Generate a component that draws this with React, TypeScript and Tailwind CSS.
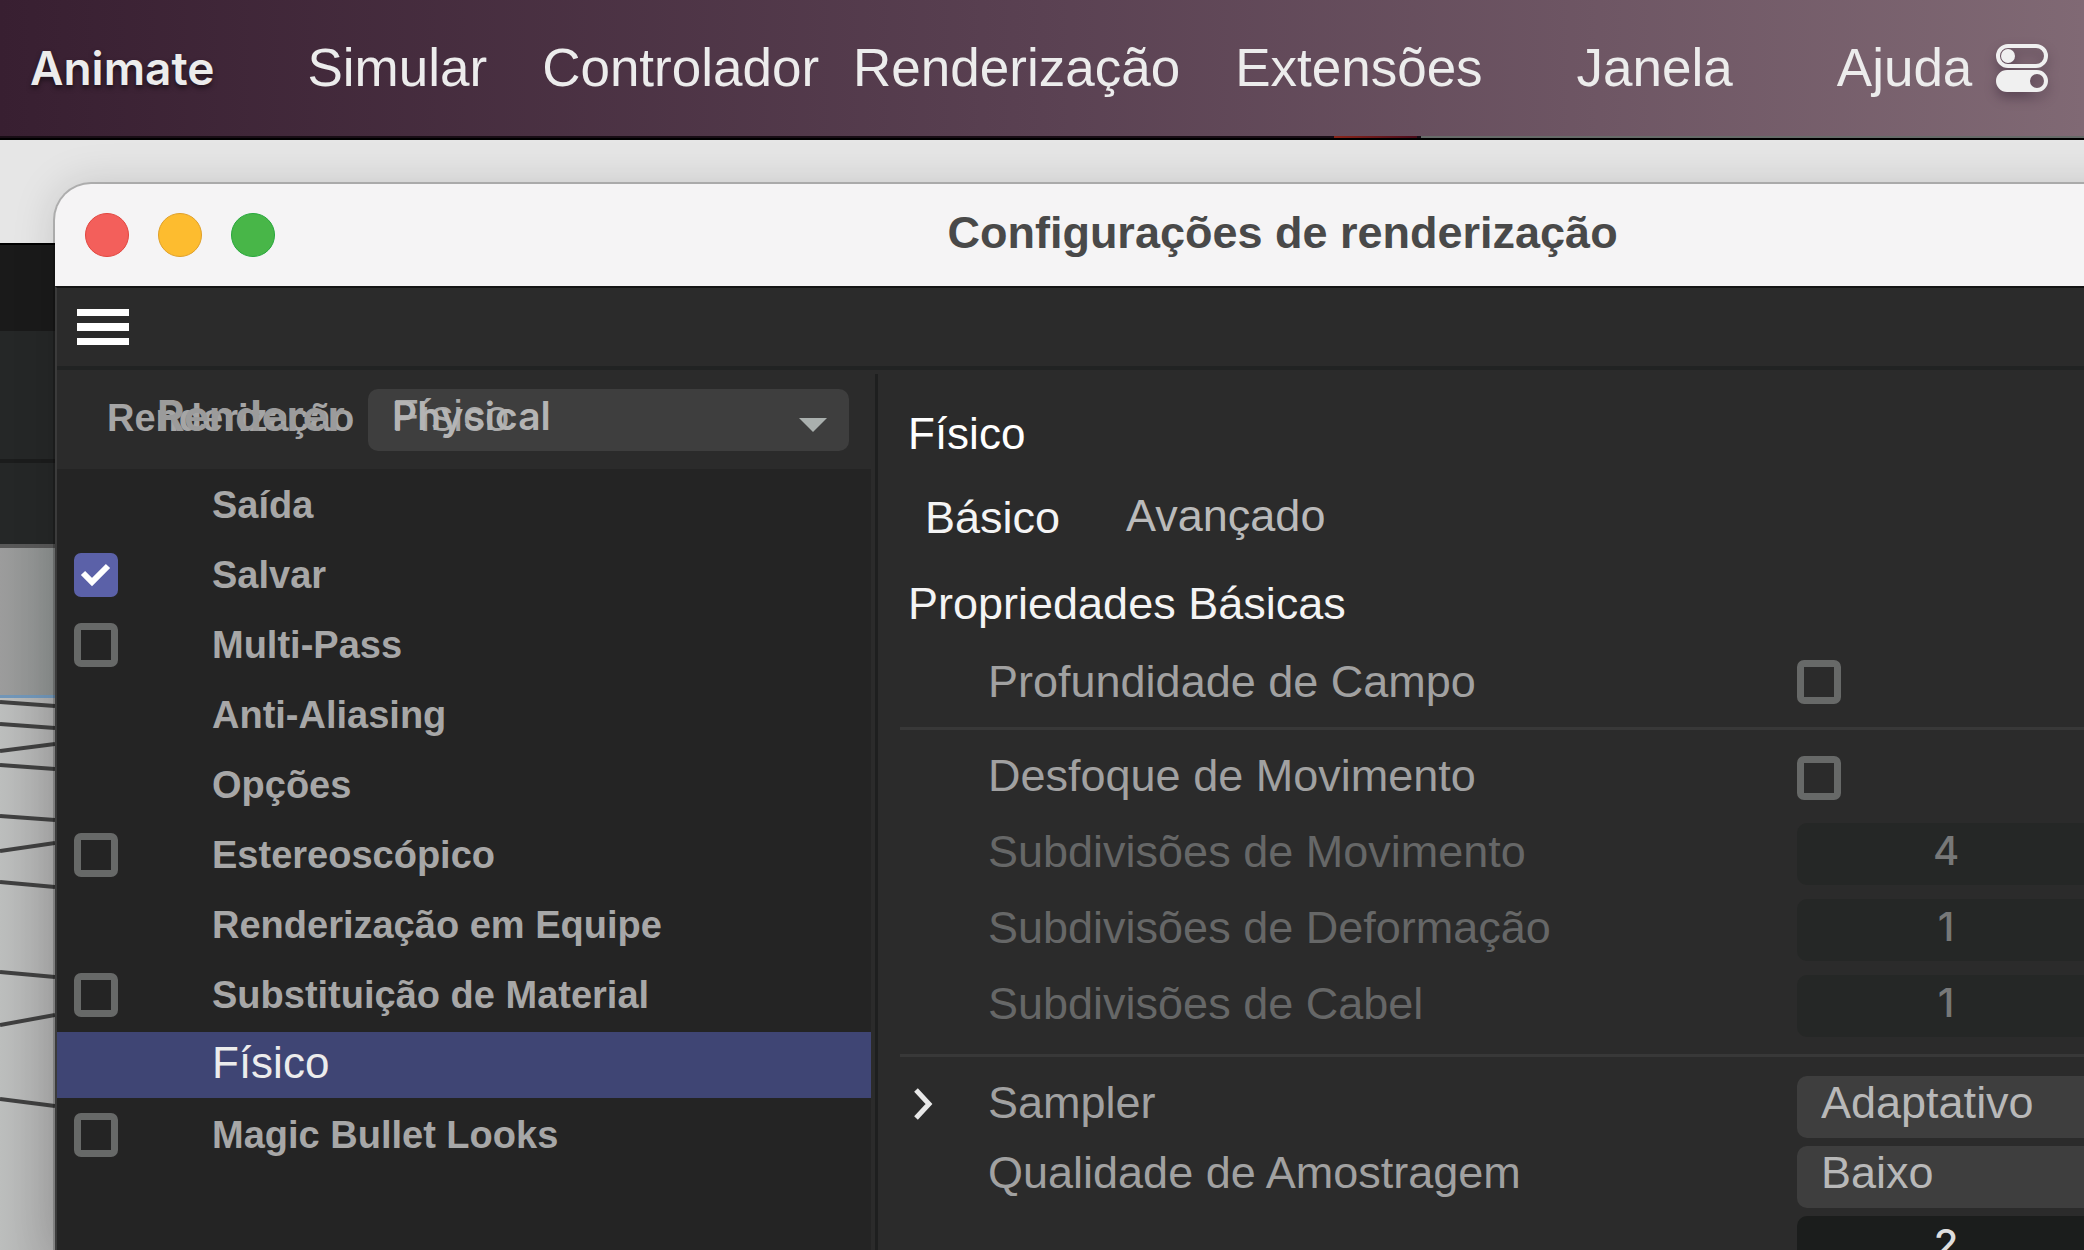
import { useState } from "react"
import type { ReactNode } from "react"
import clsx from "clsx"

const menuItems = [
  { label: "Simular", space: "ml-[93px]" },
  { label: "Controlador", space: "ml-[55px]" },
  { label: "Renderização", space: "ml-[34px]" },
  { label: "Extensões", space: "ml-[55px]" },
  { label: "Janela", space: "ml-[94px]" },
  { label: "Ajuda", space: "ml-[104px]" },
]

const sections = [
  { label: "Saída" },
  { label: "Salvar", checked: true },
  { label: "Multi-Pass", checked: false },
  { label: "Anti-Aliasing" },
  { label: "Opções" },
  { label: "Estereoscópico", checked: false },
  { label: "Renderização em Equipe" },
  { label: "Substituição de Material", checked: false },
  { label: "Físico" },
  { label: "Magic Bullet Looks", checked: false },
]

const subdivisions = [
  { label: "Subdivisões de Movimento", value: "4" },
  { label: "Subdivisões de Deformação", value: "1" },
  { label: "Subdivisões de Cabel", value: "1" },
]

// left and right ends of the grid lines on the viewport floor
const floorLines = [
  [4, 8],
  [26, 30],
  [53, 46],
  [67, 71],
  [118, 122],
  [153, 145],
  [184, 189],
  [274, 279],
  [327, 317],
  [401, 408],
]

const selectStyle =
  "h-[62px] appearance-none rounded-[10px] bg-[#3e3e3e] pl-6 pb-2 leading-[54px] outline-none"

function ControlCenterIcon() {
  return (
    <svg width="52" height="50" viewBox="0 0 52 50" className="drop-shadow-[0_6px_6px_rgba(50,30,50,0.45)]">
      <rect x="2" y="3" width="48" height="20" rx="10" fill="none" stroke="#f0f0f0" strokeWidth="4" />
      <circle cx="12" cy="13" r="7" fill="#f0f0f0" />
      <path
        fill="#f0f0f0"
        fillRule="evenodd"
        d="M11 27h30a11 11 0 0 1 0 22H11a11 11 0 0 1 0-22zM41 31a7 7 0 1 0 0 14a7 7 0 0 0 0-14z"
      />
    </svg>
  )
}

function MenuBar() {
  return (
    <header className="shrink-0">
      <nav className="flex h-[136px] items-center bg-linear-to-r from-[#381f31] via-[#5a4152] to-[#806974] pl-[30px] text-[53px] whitespace-nowrap text-[#ececec]">
        <button className="font-[Inter,sans-serif] text-[46px] font-semibold text-shadow-[0_3px_5px_rgba(0,0,0,0.5)]">
          Animate
        </button>
        {menuItems.map((item) => (
          <button key={item.label} className={item.space}>
            {item.label}
          </button>
        ))}
        <button aria-label="Central de Controle" className="ml-6">
          <ControlCenterIcon />
        </button>
      </nav>
      <div className="flex h-[2px] bg-[#180d15]">
        <div className="ml-[64%] w-[4%] bg-linear-to-r from-[#8a2418] to-[#4a0a18]" />
        <div className="ml-[4px] flex-1 bg-[#676b69]" />
      </div>
      <div className="h-[2px] bg-black" />
    </header>
  )
}

function Checkbox({ id, defaultChecked }: { id: string; defaultChecked?: boolean }) {
  const [checked, setChecked] = useState(!!defaultChecked)

  return (
    <span className="relative block size-11">
      <input
        id={id}
        type="checkbox"
        checked={checked}
        onChange={(e) => setChecked(e.target.checked)}
        className="block size-11 appearance-none rounded-[7px] border-[7px] border-[#676968] checked:border-[#5b61a8] checked:bg-[#5b61a8]"
      />
      {checked && (
        <svg viewBox="0 0 44 44" className="pointer-events-none absolute inset-0">
          <path d="M9 20L18 29L34 13" fill="none" stroke="#fff" strokeWidth="6" />
        </svg>
      )}
    </span>
  )
}

function Viewport() {
  return (
    <div className="flex w-[55px] shrink-0 flex-col">
      <div className="h-[59px]" />
      <div className="h-[88px] border-t-2 border-black bg-[#1a1a1a]" />
      <div className="h-[128px] bg-[#252727]" />
      <div className="h-1 bg-[#1b1c1c]" />
      <div className="h-[81px] bg-[#252727]" />
      <div className="h-1 bg-[#585858]" />
      <div className="h-[147px] bg-linear-to-r from-[#9c9c9c] to-[#8b8f8e]" />
      <div className="h-[3px] bg-[#7196b8]" />
      <div className="flex-1 overflow-hidden bg-linear-to-r from-[#bcbebd] to-[#acacac]">
        <svg width="55" height="552" viewBox="0 0 55 552">
          {floorLines.map(([a, b]) => (
            <line key={a} x1="0" y1={a} x2="55" y2={b} stroke="#3f3f3f" strokeWidth="4" />
          ))}
        </svg>
      </div>
    </div>
  )
}

function Sidebar() {
  return (
    <aside className="flex w-[814px] shrink-0 flex-col">
      {/* RENDERER */}
      <div className="flex h-[99px] items-center gap-[14px] pl-[50px]">
        <div className="relative pb-1 text-[38px] leading-[54px] font-bold text-[#a5a5a5]">
          <label htmlFor="renderer">Renderização</label>
          <span className="absolute top-[-2px] left-[50px] font-[Inter,sans-serif] text-[42px] font-bold text-[#9b9b9b]">
            Renderer
          </span>
        </div>
        <div className="relative">
          <select id="renderer" className={clsx(selectStyle, "w-[481px] text-[44px] text-[#aaaaaa]")}>
            <option>Físico</option>
            <option>Padrão</option>
          </select>
          <span className="pointer-events-none absolute top-0 left-6 font-[Inter,sans-serif] text-[39px] leading-[54px] font-semibold text-[#b4b4b4]">
            Physical
          </span>
          <svg width="28" height="14" viewBox="0 0 28 14" className="pointer-events-none absolute top-[29px] right-[22px]">
            <path d="M0 0H28L14 14Z" fill="#aab0ae" />
          </svg>
        </div>
      </div>

      {/* SECTIONS */}
      <ul className="flex flex-1 flex-col gap-1 bg-[#242424] pt-[3px]">
        {sections.map((section, i) => {
          const selected = section.label === "Físico"
          const id = `section-${i}`
          return (
            <li
              key={section.label}
              className={clsx(
                "flex h-[66px] shrink-0 items-center pl-[17px]",
                selected
                  ? "bg-[#3f4574] text-[44px] text-[#ececec]"
                  : "text-[38px] font-bold text-[#a7a7a7]"
              )}
            >
              <div className="w-[138px]">
                {section.checked !== undefined && <Checkbox id={id} defaultChecked={section.checked} />}
              </div>
              {section.checked !== undefined ? (
                <label htmlFor={id}>{section.label}</label>
              ) : (
                <button className={selected ? "pb-1" : ""}>{section.label}</button>
              )}
            </li>
          )
        })}
      </ul>
    </aside>
  )
}

function Field({ label, htmlFor, className, children }: {
  label: string
  htmlFor: string
  className?: string
  children: ReactNode
}) {
  return (
    <div className="flex h-[62px] shrink-0 items-center">
      <label htmlFor={htmlFor} className={clsx("w-[897px] shrink-0 pl-[88px]", className)}>
        {label}
      </label>
      {children}
    </div>
  )
}

function Settings() {
  return (
    <main className="flex min-w-0 flex-1 flex-col overflow-hidden pt-8 pl-[22px] text-[45px] text-[#a1a1a1]">
      <h2 className="h-16 shrink-0 pl-2 text-[44px] leading-[64px] text-white">Físico</h2>
      <div role="tablist" className="mt-5 flex h-16 shrink-0 items-center gap-[66px] pl-[25px]">
        <button role="tab" aria-selected="true" className="text-[#f4f4f4]">
          Básico
        </button>
        <button role="tab" aria-selected="false" className="pb-1 text-[#bababa]">
          Avançado
        </button>
      </div>
      <h3 className="mt-[22px] h-16 shrink-0 pl-2 leading-[64px] text-[#f4f4f4]">Propriedades Básicas</h3>

      <div className="flex flex-col pt-[15px] pb-[14px]">
        <Field label="Profundidade de Campo" htmlFor="dof">
          <Checkbox id="dof" />
        </Field>
      </div>

      <div className="flex flex-col gap-[14px] border-y-3 border-[#383838] py-[17px]">
        <Field label="Desfoque de Movimento" htmlFor="blur" className="pb-1">
          <Checkbox id="blur" />
        </Field>
        {subdivisions.map((item, i) => (
          <Field key={item.label} label={item.label} htmlFor={`sub-${i}`} className="pb-1 text-[#666767]">
            <input
              id={`sub-${i}`}
              disabled
              defaultValue={item.value}
              className="h-[62px] w-[298px] rounded-[10px] bg-[#252726] pb-2 text-center font-[Inter,sans-serif] text-[40px] font-medium text-[#777878]"
            />
          </Field>
        ))}
      </div>

      <div className="flex flex-col gap-2 pt-[19px]">
        <div className="relative">
          <Field label="Sampler" htmlFor="sampler" className="pb-2">
            <select id="sampler" className={clsx(selectStyle, "w-[298px] text-[#b8b8b8]")}>
              <option>Adaptativo</option>
              <option>Fixo</option>
            </select>
          </Field>
          <button aria-label="Expandir Sampler" className="absolute top-3 left-[13px]">
            <svg width="20" height="32" viewBox="0 0 20 32">
              <path d="M3 2L16 16L3 30" fill="none" stroke="#e8e8e8" strokeWidth="5" />
            </svg>
          </button>
        </div>
        <Field label="Qualidade de Amostragem" htmlFor="quality" className="pb-2">
          <select id="quality" className={clsx(selectStyle, "w-[298px] text-[#b8b8b8]")}>
            <option>Baixo</option>
            <option>Alto</option>
          </select>
        </Field>
        <input
          aria-label="Subdivisões de Amostragem"
          defaultValue="2"
          className="ml-[897px] h-[62px] w-[298px] rounded-[10px] bg-[#1b1d1c] pb-2 text-center font-[Inter,sans-serif] text-[40px] font-medium text-[#dedede]"
        />
      </div>
    </main>
  )
}

export default function App() {
  return (
    <div className="flex h-screen flex-col overflow-hidden bg-[#e6e6e6] font-['Liberation_Sans',Arial,sans-serif]">
      <MenuBar />

      <div className="flex min-h-0 flex-1 flex-col pt-11">
        <div className="flex min-h-0 flex-1">
          <Viewport />

          {/* The window runs past the right edge of the screen */}
          <div className="min-w-0 flex-1">
            <div className="relative flex h-full w-[121%] flex-col rounded-tl-[36px] bg-[#f5f4f5] shadow-[0_0_0_2px_rgba(0,0,0,0.2),0_0_44px_rgba(0,0,0,0.15)]">
              <div className="relative flex h-[102px] shrink-0 items-center justify-center">
                <div className="absolute left-[30px] flex gap-[29px]">
                  <button aria-label="Fechar" className="size-11 rounded-full border border-[#e2463f] bg-[#f35f5b]" />
                  <button aria-label="Minimizar" className="size-11 rounded-full border border-[#e0a028] bg-[#fdbc2f]" />
                  <button aria-label="Ampliar" className="size-11 rounded-full border border-[#27a83c] bg-[#48b648]" />
                </div>
                <h1 className="pb-1 text-[45px] font-bold text-[#494949]">Configurações de renderização</h1>
              </div>

              <div className="flex min-h-0 flex-1 flex-col border-t-2 border-l-2 border-t-[#141414] border-l-[#3b3b3b] bg-[#2b2b2b]">
                <div className="flex h-[82px] shrink-0 items-center border-b-4 border-[#212323] pl-5">
                  <button aria-label="Menu" className="flex flex-col gap-[7px]">
                    <span className="h-[7px] w-[52px] bg-white" />
                    <span className="h-2 w-[52px] bg-white" />
                    <span className="h-[7px] w-[52px] bg-white" />
                  </button>
                </div>
                <div className="flex min-h-0 flex-1">
                  <Sidebar />
                  <div className="mt-1 ml-1 w-[3px] shrink-0 bg-[#1e1f1f]" />
                  <Settings />
                </div>
              </div>
            </div>
          </div>
        </div>
      </div>
    </div>
  )
}
